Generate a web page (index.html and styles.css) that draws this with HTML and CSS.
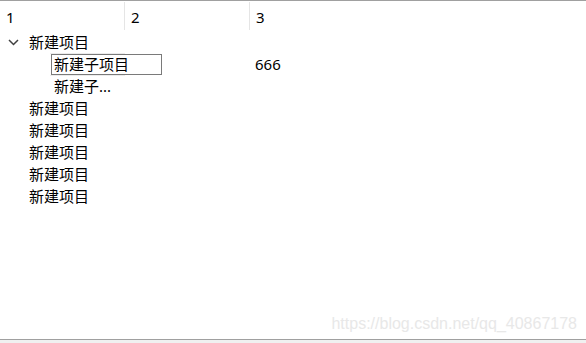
FILE: index.html
```html
<!DOCTYPE html>
<html>
<head>
<meta charset="utf-8">
<link rel="stylesheet" href="styles.css">
</head>
<body>
<div class="tree">
  <div class="header">
    <div class="hcell">1</div>
    <div class="hcell">2</div>
    <div class="hcell last">3</div>
  </div>
  <div class="rows">
    <div class="row">
      <div class="cell lvl0">
        <svg class="chev" width="11" height="7" viewBox="0 0 11 7"><path d="M1 1 L5.5 5.5 L10 1" fill="none" stroke="#404040" stroke-width="1.5"/></svg>
        <span>新建项目</span>
      </div>
      <div class="cell"></div>
      <div class="cell"></div>
    </div>
    <div class="row">
      <div class="cell editing"><span class="editor">新建子项目</span></div>
      <div class="cell"></div>
      <div class="cell col3">666</div>
    </div>
    <div class="row">
      <div class="cell lvl1"><span class="txt">新建子...</span></div>
      <div class="cell"></div>
      <div class="cell"></div>
    </div>
    <div class="row"><div class="cell lvl0"><span>新建项目</span></div><div class="cell"></div><div class="cell"></div></div>
    <div class="row"><div class="cell lvl0"><span>新建项目</span></div><div class="cell"></div><div class="cell"></div></div>
    <div class="row"><div class="cell lvl0"><span>新建项目</span></div><div class="cell"></div><div class="cell"></div></div>
    <div class="row"><div class="cell lvl0"><span>新建项目</span></div><div class="cell"></div><div class="cell"></div></div>
    <div class="row"><div class="cell lvl0"><span>新建项目</span></div><div class="cell"></div><div class="cell"></div></div>
  </div>
  <div class="watermark">https://blog.csdn.net/qq_40867178</div>
</div>
<div class="bottombar"></div>
</body>
</html>
```
FILE: styles.css
```css
html, body {
  margin: 0;
  padding: 0;
  height: 100%;
}
body {
  display: flex;
  flex-direction: column;
  background: #ffffff;
  font-family: "Noto Sans", "Noto Sans CJK SC", sans-serif;
  font-size: 15px;
  color: #000000;
}
.tree {
  position: relative;
  flex: 1;
  border-top: 1px solid #a0a0a0;
  overflow: hidden;
}
.header {
  display: grid;
  grid-template-columns: 125px 125px 1fr;
  height: 30px;
}
.hcell {
  display: flex;
  align-items: center;
  padding-left: 6px;
  margin: 1px 0;
  border-right: 1px solid #e5e5e5;
  padding-top: 2px;
  line-height: 1;
}
.hcell.last {
  border-right: none;
}
.rows {
  display: flex;
  flex-direction: column;
}
.row {
  display: grid;
  grid-template-columns: 125px 125px 1fr;
  height: 22px;
}
.cell {
  display: flex;
  align-items: center;
  white-space: nowrap;
  line-height: 1;
}
.lvl0 {
  padding-left: 8px;
}
.chev {
  margin-right: 10px;
  margin-top: 1px;
}
.lvl0 span:only-child {
  margin-left: 21px;
}
.lvl1 {
  padding-left: 51px;
}
.editing {
  margin-left: 50px;
  border-top: 1px solid #ececec;
  border-bottom: 1px solid #ececec;
  overflow: visible;
}
.editor {
  flex-shrink: 0;
  display: flex;
  align-items: center;
  box-sizing: border-box;
  width: 111px;
  height: 21px;
  margin-left: 1px;
  border: 1px solid #7a7a7a;
  background: #ffffff;
  padding-left: 2px;
  position: relative;
  z-index: 1;
}
.txt {
  padding-left: 3px;
}
.col3 {
  padding-left: 5px;
}
.watermark {
  position: absolute;
  right: 9px;
  bottom: 6px;
  font-family: "Liberation Sans", Arial, sans-serif;
  font-size: 16px;
  color: #e8e8e8;
}
.bottombar {
  height: 3px;
  border-top: 1px solid #a0a0a0;
  background: #f0f0f0;
}
```
